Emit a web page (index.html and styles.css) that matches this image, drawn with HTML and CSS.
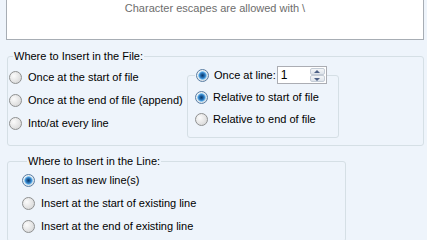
FILE: index.html
```html
<!DOCTYPE html>
<html>
<head>
  <meta charset="UTF-8">
  <title>Insert Text</title>
  <link rel="stylesheet" href="styles.css">
</head>

<body>
  <div class="text-box">
    <p>Character escapes are allowed with \</p>
  </div>

  <fieldset class="group file-group">
    <legend>Where to Insert in the File:</legend>
    <div class="option-col">
      <label class="option"><input type="radio" name="file"> Once at the start of file</label>
      <label class="option"><input type="radio" name="file"> Once at the end of file (append)</label>
      <label class="option"><input type="radio" name="file"> Into/at every line</label>
    </div>

    <fieldset class="group line-box">
      <legend>
        <label class="option caption"><input type="radio" name="file" checked> Once at line:</label>
        <span class="spin">
          <span class="spin-value">1</span>
          <span class="spin-buttons">
            <span class="spin-btn up"></span>
            <span class="spin-btn down"></span>
          </span>
        </span>
      </legend>
      <label class="option row-22"><input type="radio" name="rel" checked> Relative to start of file</label>
      <label class="option row-22"><input type="radio" name="rel"> Relative to end of file</label>
    </fieldset>
  </fieldset>

  <fieldset class="group line-group">
    <legend>Where to Insert in the Line:</legend>
    <label class="option"><input type="radio" name="line" checked> Insert as new line(s)</label>
    <label class="option"><input type="radio" name="line"> Insert at the start of existing line</label>
    <label class="option"><input type="radio" name="line"> Insert at the end of existing line</label>
  </fieldset>
</body>
</html>
```

FILE: styles.css
```css
body {
  margin: 0;
  background: #eef4fb; /* dialog face */
  font-family: "Liberation Sans", Arial, sans-serif;
  font-size: 11px;
  line-height: 13px;
  color: #000;
  overflow: hidden;
  height: 240px;
}

.text-box {
  margin: -1px 3px 0 6px;
  height: 37px;
  padding-top: 2px;
  background: #fff;
  border: 1px solid #a7adb4;
  text-align: center;
  color: #6d6d6d;
}

.text-box p {
  margin: 0;
}

.group {
  border: 1px solid #d5dfe5;
  border-radius: 3px;
  min-width: 0;
}

.group legend {
  padding: 0 1px;
  margin-left: 5px;
}

.file-group {
  margin: 10px 3px 0 7px;
  padding: 3px 0 7px 0;
  display: flex;
  align-items: flex-start;
}

.option-col {
  width: 178px;
  padding-left: 1px;
}

.option {
  display: flex;
  align-items: center;
  height: 23px;
  white-space: nowrap;
}

.option input {
  appearance: none;
  -webkit-appearance: none;
  width: 13px;
  height: 13px;
  margin: 0 6px 0 0;
  border: 1px solid #8f9090;
  border-radius: 50%;
  background: radial-gradient(circle at 35% 35%, #fbfbfb 0, #e4e4e4 55%, #cfd0d1 100%);
  flex: none;
}

.option input:checked {
  border-color: #5a7ea3;
  background:
    radial-gradient(circle at 50% 50%, #0b3a6a 0, #1a5a98 1.5px, #3b8bd0 3px, #8ccaf2 4px, rgba(170, 215, 245, 0) 4.6px),
    radial-gradient(circle at 35% 35%, #fbfbfb 0, #e6eaee 55%, #cdd3d9 100%);
}

/* inner box titled by the "Once at line" radio */
.line-box {
  width: 143px;
  margin: 0;
  padding: 2px 0 7px 7px;
}

.line-box legend {
  display: flex;
  align-items: center;
  margin-left: 0;
  padding: 0 0 0 1px;
}

.option.caption {
  height: 18px;
  margin-right: 1px;
}

.option.caption input,
.line-box .option input {
  margin-right: 5px;
}

.row-22 {
  height: 22px;
}

.spin {
  display: flex;
  width: 50px;
  height: 18px;
  box-sizing: border-box;
  border: 1px solid #abadb3;
  background: #fff;
}

.spin-value {
  flex: 1;
  padding: 2px 0 0 3px;
  font-size: 12px;
}

.spin-buttons {
  width: 15px;
  display: flex;
  flex-direction: column;
  padding: 1px 1px 1px 0;
}

.spin-btn {
  flex: 1;
  border: 1px solid #c4ccd6;
  border-radius: 2px;
  background: linear-gradient(#f4f6f8, #dde3ea);
  position: relative;
}

.spin-btn::after {
  content: "";
  position: absolute;
  left: 3px;
  top: 1px;
  border-left: 3px solid transparent;
  border-right: 3px solid transparent;
}

.spin-btn.up::after {
  border-bottom: 3px solid #4d6185;
}

.spin-btn.down::after {
  border-top: 3px solid #4d6185;
  top: 2px;
}

.line-group {
  margin: 9px 81px 0 7px;
  padding: 1px 0 3px 14px;
}
```
